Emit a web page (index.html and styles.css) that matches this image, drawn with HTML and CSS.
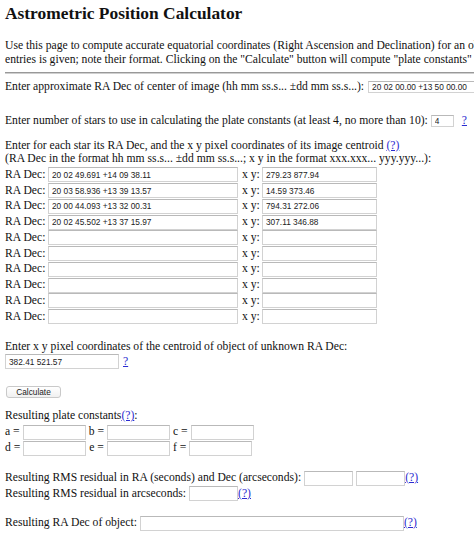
FILE: index.html
```html
<!DOCTYPE html>
<html lang="en">
<head>
<meta charset="utf-8">
<title>Astrometric Position Calculator</title>
<link rel="stylesheet" href="styles.css">
</head>
<body>
<h1 class="title">Astrometric Position Calculator</h1>
<p class="intro">Use this page to compute accurate equatorial coordinates (Right Ascension and Declination) for an object<br>entries is given; note their format. Clicking on the "Calculate" button will compute "plate constants" and</p>
<hr class="rule">
<div class="row center-row"><span>Enter approximate RA Dec of center of image (hh mm ss.s... ±dd mm ss.s...):</span><input class="in in-small in-center" type="text" value="20 02 00.00 +13 50 00.00"></div>
<div class="row num-row"><span>Enter number of stars to use in calculating the plate constants (at least 4, no more than 10):</span><input class="in in-small in-num" type="text" value="4"><a class="help help-q" href="#">?</a></div>
<p class="instr">Enter for each star its RA Dec, and the x y pixel coordinates of its image centroid <a class="help" href="#">(?)</a><br>(RA Dec in the format hh mm ss.s... ±dd mm ss.s...; x y in the format xxx.xxx... yyy.yyy...):</p>
<div class="stars">
  <div class="row star-row"><span class="lbl-radec">RA Dec:</span><input class="in in-radec" type="text" value="20 02 49.691 +14 09 38.11"><span class="lbl-xy">x y:</span><input class="in in-xy" type="text" value="279.23 877.94"></div>
  <div class="row star-row"><span class="lbl-radec">RA Dec:</span><input class="in in-radec" type="text" value="20 03 58.936 +13 39 13.57"><span class="lbl-xy">x y:</span><input class="in in-xy" type="text" value="14.59 373.46"></div>
  <div class="row star-row"><span class="lbl-radec">RA Dec:</span><input class="in in-radec" type="text" value="20 00 44.093 +13 32 00.31"><span class="lbl-xy">x y:</span><input class="in in-xy" type="text" value="794.31 272.06"></div>
  <div class="row star-row"><span class="lbl-radec">RA Dec:</span><input class="in in-radec" type="text" value="20 02 45.502 +13 37 15.97"><span class="lbl-xy">x y:</span><input class="in in-xy" type="text" value="307.11 346.88"></div>
  <div class="row star-row"><span class="lbl-radec">RA Dec:</span><input class="in in-radec" type="text"><span class="lbl-xy">x y:</span><input class="in in-xy" type="text"></div>
  <div class="row star-row"><span class="lbl-radec">RA Dec:</span><input class="in in-radec" type="text"><span class="lbl-xy">x y:</span><input class="in in-xy" type="text"></div>
  <div class="row star-row"><span class="lbl-radec">RA Dec:</span><input class="in in-radec" type="text"><span class="lbl-xy">x y:</span><input class="in in-xy" type="text"></div>
  <div class="row star-row"><span class="lbl-radec">RA Dec:</span><input class="in in-radec" type="text"><span class="lbl-xy">x y:</span><input class="in in-xy" type="text"></div>
  <div class="row star-row"><span class="lbl-radec">RA Dec:</span><input class="in in-radec" type="text"><span class="lbl-xy">x y:</span><input class="in in-xy" type="text"></div>
  <div class="row star-row"><span class="lbl-radec">RA Dec:</span><input class="in in-radec" type="text"><span class="lbl-xy">x y:</span><input class="in in-xy" type="text"></div>
</div>
<p class="pix-label">Enter x y pixel coordinates of the centroid of object of unknown RA Dec:</p>
<div class="row pix-row"><input class="in in-pix" type="text" value="382.41 521.57"><a class="help help-q2" href="#">?</a></div>
<button class="calc" type="button">Calculate</button>
<p class="res-label">Resulting plate constants<a class="help" href="#">(?)</a>:</p>
<div class="plate">
  <div class="row plate-row"><span>a =</span><input class="in in-plate" type="text"><span>b =</span><input class="in in-plate" type="text"><span>c =</span><input class="in in-plate" type="text"></div>
  <div class="row plate-row"><span>d =</span><input class="in in-plate" type="text"><span>e =</span><input class="in in-plate" type="text"><span>f =</span><input class="in in-plate" type="text"></div>
</div>
<div class="rms">
  <div class="row rms-row"><span>Resulting RMS residual in RA (seconds) and Dec (arcseconds):</span><input class="in in-rms" type="text"><input class="in in-rms" type="text"><a class="help" href="#">(?)</a></div>
  <div class="row rms-row"><span>Resulting RMS residual in arcseconds:</span><input class="in in-rms" type="text"><a class="help" href="#">(?)</a></div>
</div>
<div class="row result-row"><span>Resulting RA Dec of object:</span><input class="in in-result" type="text"><a class="help" href="#">(?)</a></div>
</body>
</html>
```
FILE: styles.css
```css
html, body {
  overflow: hidden;
}
body {
  margin: 0;
  padding: 2px 0 0 5px;
  font-family: "Liberation Serif", "Times New Roman", serif;
  font-size: 11.65px;
  line-height: 13.5px;
  color: #111;
  background: #fff;
  width: 469px;
}
.title {
  margin: 0;
  font-size: 17.4px;
  line-height: 22px;
  font-weight: bold;
  white-space: nowrap;
}
.intro {
  margin: 15.2px 0 0;
  white-space: nowrap;
}
.rule {
  margin: 6.3px 0 0;
  height: 0;
  border: 0;
  border-top: 1px solid #999;
  border-bottom: 1px solid #cfcfcf;
}
.row {
  display: flex;
  align-items: baseline;
  white-space: nowrap;
}
.row > span { flex: none; }
.in {
  box-sizing: border-box;
  flex: none;
  height: 15px;
  margin: 0;
  padding: 0 3px;
  border: 1px solid #d2d2d2;
  border-top-color: #b9b9b9;
  border-radius: 0;
  background: #fff;
  font-family: "Liberation Sans", Arial, sans-serif;
  font-size: 8.3px;
  color: #222;
  outline: none;
}
.in-small { height: 12px; }
.help {
  color: #2b2bd0;
  text-decoration: underline;
  flex: none;
}
.center-row { margin-top: 5.9px; }
.in-center { width: 115px; margin-left: 4px; }
.num-row { margin-top: 20.4px; }
.in-num { width: 23px; margin-left: 3px; }
.help-q { margin-left: 8px; }
.instr {
  margin: 11.2px 0 0;
  white-space: nowrap;
}
.stars { margin-top: 1.3px; }
.star-row { height: 15.75px; }
.lbl-radec { width: 43px; }
.in-radec { width: 190px; }
.lbl-xy { width: 24px; box-sizing: border-box; padding-left: 4px; }
.in-xy { width: 115px; }
.pix-label {
  margin: 14.9px 0 0;
  white-space: nowrap;
}
.pix-row { margin-top: 1px; }
.in-pix { width: 114px; }
.help-q2 { margin-left: 4px; }
.calc {
  display: block;
  box-sizing: border-box;
  margin: 16.7px 0 0 1px;
  width: 55px;
  height: 12.3px;
  padding: 0;
  border: 1px solid #c9c9c9;
  border-radius: 3px;
  background: linear-gradient(#ffffff, #f0f0f0);
  font-family: "Liberation Sans", Arial, sans-serif;
  font-size: 8.3px;
  line-height: 10px;
  color: #222;
}
.res-label {
  margin: 10.9px 0 0;
  white-space: nowrap;
}
.plate { margin-top: 2.4px; }
.plate-row { height: 15.75px; gap: 3px; }
.in-plate { width: 63px; }
.rms { margin-top: 14.2px; }
.rms-row { height: 15.75px; }
.in-rms { width: 49px; margin-left: 3px; }
.result-row { margin-top: 13.5px; }
.in-result { width: 264px; margin-left: 3px; }
```
